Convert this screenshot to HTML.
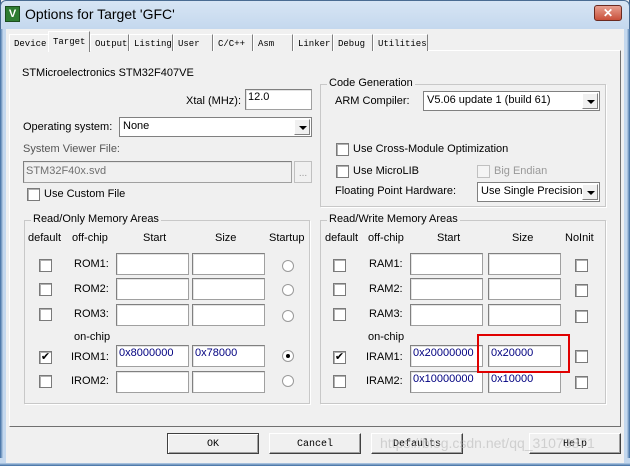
<!DOCTYPE html>
<html><head><style>
*{margin:0;padding:0;box-sizing:border-box}
body{width:630px;height:466px;overflow:hidden;background:#f0f0f0;font-family:"Liberation Sans",Arial,sans-serif;font-size:11px;color:#000;position:relative}
.a{position:absolute;white-space:nowrap}
.frame{position:absolute;left:0;top:0;width:630px;height:466px;border:1px solid #3a5f8a;border-top:none;background:#f0f0f0}
.title{position:absolute;left:0;top:0;width:630px;height:29px;background:linear-gradient(#d7e5f4,#c4d8ee);border:1px solid #4a6c92;border-bottom:none;border-radius:6px 6px 0 0}
.lb{position:absolute;left:0;top:29px;width:8px;height:437px;background:linear-gradient(90deg,#3b6aa0,#c4d8ee 40%,#c4d8ee)}
.rb{position:absolute;right:0;top:29px;width:8px;height:437px;background:linear-gradient(270deg,#3b6aa0,#c4d8ee 40%,#c4d8ee)}
.bb{position:absolute;left:0;top:458px;width:630px;height:8px;background:linear-gradient(0deg,#3b6aa0,#c4d8ee 40%,#c4d8ee)}
.inner{position:absolute;left:6px;top:29px;width:618px;height:434px;background:#f0f0f0}
.tab{position:absolute;top:34px;height:17px;border:1px solid #fff;border-right-color:#808080;border-bottom:none;font-family:"Liberation Mono",monospace;font-size:9px;padding:4px 0 0 4px;background:#f0f0f0;white-space:nowrap;overflow:hidden}
.panel{position:absolute;left:9px;top:50px;width:612px;height:377px;border:1px solid #fff;border-right-color:#707070;border-bottom-color:#707070}
.in{position:absolute;height:22px;background:#fff;border:1px solid #a0a0a0;border-top-color:#808080;border-left-color:#808080;box-shadow:inset 1px 1px 0 #e3e3e3;color:#000080;padding:1px 0 0 2px;font-size:11px;white-space:nowrap;overflow:hidden}
.grp{position:absolute;border:1px solid #c8c8c8;box-shadow:1px 1px 0 #fff}
.gl{position:absolute;top:-8px;left:6px;background:#f0f0f0;padding:0 2px;white-space:nowrap}
.cb{position:absolute;width:13px;height:13px;background:#fff;border:1px solid #7a7a7a;box-shadow:inset 1px 1px 0 #b0b0b0}
.rd{position:absolute;width:12px;height:12px;border-radius:50%;border:1px solid #9a9a9a;background:#fff}
.sel{position:absolute;height:20px;background:#fff;border:1px solid #808080;padding:2px 0 0 3px;white-space:nowrap;overflow:hidden}
.arr{position:absolute;right:1px;top:1px;width:16px;height:16px;background:#f0f0f0;border:1px solid #fff;border-right-color:#808080;border-bottom-color:#808080}
.arr:after{content:"";position:absolute;left:4px;top:6px;border:4px solid transparent;border-top:4px solid #000;border-bottom:0}
.btn{position:absolute;top:433px;width:92px;height:21px;border:1px solid #fff;border-right-color:#404040;border-bottom-color:#404040;box-shadow:inset -1px -1px 0 #a0a0a0;font-family:"Liberation Mono",monospace;font-size:10px;text-align:center;padding-top:5px}
</style></head><body>
<div class="frame"></div>
<div class="lb"></div><div class="rb"></div><div class="bb"></div>
<div class="title"></div>
<div class="a" style="left:5px;top:6px;width:15px;height:16px;background:#2e7d32;border:1px solid #1b4d1e;color:#fff;font-size:11px;font-weight:bold;line-height:14px;text-align:center">V</div>
<div class="a" style="left:25px;top:6px;font-size:14px;color:#000">Options for Target 'GFC'</div>
<div class="a" style="left:594px;top:5px;width:28px;height:16px;background:linear-gradient(#e8a090,#c8503a);border:1px solid #6a2a20;border-radius:3px;color:#fff;font-weight:bold;text-align:center;font-size:12px;line-height:14px">✕</div>
<div class="inner"></div>
<div class="panel"></div>
<div class="tab" style="left:9px;width:40px">Device</div>
<div class="tab" style="left:48px;top:31px;height:21px;width:42px;border-right:1px solid #808080;padding-top:5px">Target</div>
<div class="tab" style="left:90px;width:39px">Output</div>
<div class="tab" style="left:129px;width:44px">Listing</div>
<div class="tab" style="left:173px;width:40px">User</div>
<div class="tab" style="left:213px;width:40px">C/C++</div>
<div class="tab" style="left:253px;width:40px">Asm</div>
<div class="tab" style="left:293px;width:40px">Linker</div>
<div class="tab" style="left:333px;width:40px">Debug</div>
<div class="tab" style="left:373px;width:55px">Utilities</div>

<div class="a" style="left:22px;top:67px">STMicroelectronics STM32F407VE</div>
<div class="a" style="left:186px;top:95px">Xtal (MHz):</div>
<div class="in" style="left:245px;top:89px;width:67px;height:21px;color:#000">12.0</div>
<div class="a" style="left:23px;top:121px">Operating system:</div>
<div class="sel" style="left:119px;top:117px;width:193px">None<div class="arr"></div></div>
<div class="a" style="left:23px;top:143px;color:#555">System Viewer File:</div>
<div class="in" style="left:23px;top:161px;width:269px;background:#f0f0f0;color:#707070;padding-top:3px">STM32F40x.svd</div>
<div class="a" style="left:294px;top:161px;width:18px;height:22px;border:1px solid #c0c0c0;color:#999;text-align:center;font-size:10px;padding-top:6px">...</div>
<div class="cb" style="left:27px;top:188px"></div>
<div class="a" style="left:44px;top:188px">Use Custom File</div>

<div class="grp" style="left:320px;top:84px;width:286px;height:123px"><div class="gl">Code Generation</div></div>
<div class="a" style="left:335px;top:95px">ARM Compiler:</div>
<div class="sel" style="left:423px;top:91px;width:177px">V5.06 update 1 (build 61)<div class="arr"></div></div>
<div class="cb" style="left:336px;top:143px"></div>
<div class="a" style="left:353px;top:143px">Use Cross-Module Optimization</div>
<div class="cb" style="left:336px;top:165px"></div>
<div class="a" style="left:353px;top:165px">Use MicroLIB</div>
<div class="cb" style="left:477px;top:165px;border-color:#c0c0c0;box-shadow:none;background:#f4f4f4"></div>
<div class="a" style="left:494px;top:165px;color:#999">Big Endian</div>
<div class="a" style="left:335px;top:185px">Floating Point Hardware:</div>
<div class="sel" style="left:477px;top:182px;width:123px">Use Single Precision<div class="arr"></div></div>

<div class="grp" style="left:24px;top:220px;width:286px;height:184px"><div class="gl">Read/Only Memory Areas</div></div>
<div class="a" style="left:28px;top:232px">default</div>
<div class="a" style="left:72px;top:232px">off-chip</div>
<div class="a" style="left:143px;top:232px">Start</div>
<div class="a" style="left:215px;top:232px">Size</div>
<div class="a" style="left:269px;top:232px">Startup</div>

<div class="cb" style="left:39px;top:259px"></div><div class="a" style="left:74px;top:258px">ROM1:</div>
<div class="in" style="left:116px;top:253px;width:73px"></div><div class="in" style="left:192px;top:253px;width:73px"></div><div class="rd" style="left:282px;top:260px"></div>
<div class="cb" style="left:39px;top:283px"></div><div class="a" style="left:74px;top:283px">ROM2:</div>
<div class="in" style="left:116px;top:278px;width:73px"></div><div class="in" style="left:192px;top:278px;width:73px"></div><div class="rd" style="left:282px;top:284px"></div>
<div class="cb" style="left:39px;top:308px"></div><div class="a" style="left:74px;top:308px">ROM3:</div>
<div class="in" style="left:116px;top:304px;width:73px"></div><div class="in" style="left:192px;top:304px;width:73px"></div><div class="rd" style="left:282px;top:310px"></div>
<div class="a" style="left:74px;top:331px">on-chip</div>
<div class="cb" style="left:39px;top:351px;font-size:11px;line-height:10px;text-align:center">✔</div><div class="a" style="left:71px;top:351px">IROM1:</div>
<div class="in" style="left:116px;top:345px;width:73px">0x8000000</div><div class="in" style="left:192px;top:345px;width:73px">0x78000</div>
<div class="rd" style="left:282px;top:350px"><div style="position:absolute;left:3px;top:3px;width:4px;height:4px;border-radius:50%;background:#000"></div></div>
<div class="cb" style="left:39px;top:375px"></div><div class="a" style="left:71px;top:375px">IROM2:</div>
<div class="in" style="left:116px;top:371px;width:73px"></div><div class="in" style="left:192px;top:371px;width:73px"></div><div class="rd" style="left:282px;top:375px"></div>

<div class="grp" style="left:320px;top:220px;width:286px;height:184px"><div class="gl">Read/Write Memory Areas</div></div>
<div class="a" style="left:325px;top:232px">default</div>
<div class="a" style="left:368px;top:232px">off-chip</div>
<div class="a" style="left:437px;top:232px">Start</div>
<div class="a" style="left:512px;top:232px">Size</div>
<div class="a" style="left:565px;top:232px">NoInit</div>

<div class="cb" style="left:333px;top:259px"></div><div class="a" style="left:369px;top:258px">RAM1:</div>
<div class="in" style="left:410px;top:253px;width:73px"></div><div class="in" style="left:488px;top:253px;width:73px"></div><div class="cb" style="left:575px;top:259px"></div>
<div class="cb" style="left:333px;top:283px"></div><div class="a" style="left:369px;top:283px">RAM2:</div>
<div class="in" style="left:410px;top:278px;width:73px"></div><div class="in" style="left:488px;top:278px;width:73px"></div><div class="cb" style="left:575px;top:284px"></div>
<div class="cb" style="left:333px;top:308px"></div><div class="a" style="left:369px;top:308px">RAM3:</div>
<div class="in" style="left:410px;top:304px;width:73px"></div><div class="in" style="left:488px;top:304px;width:73px"></div><div class="cb" style="left:575px;top:310px"></div>
<div class="a" style="left:368px;top:331px">on-chip</div>
<div class="cb" style="left:333px;top:351px;font-size:11px;line-height:10px;text-align:center">✔</div><div class="a" style="left:366px;top:351px">IRAM1:</div>
<div class="in" style="left:410px;top:345px;width:73px">0x20000000</div><div class="in" style="left:488px;top:345px;width:73px">0x20000</div><div class="cb" style="left:575px;top:350px"></div>
<div class="cb" style="left:333px;top:375px"></div><div class="a" style="left:366px;top:375px">IRAM2:</div>
<div class="in" style="left:410px;top:371px;width:73px">0x10000000</div><div class="in" style="left:488px;top:371px;width:73px">0x10000</div><div class="cb" style="left:575px;top:376px"></div>
<div class="a" style="left:477px;top:334px;width:93px;height:39px;border:2px solid #e00000"></div>

<div class="btn" style="left:167px;border:1px solid #404040;box-shadow:inset 1px 1px 0 #fff,inset -1px -1px 0 #a0a0a0">OK</div>
<div class="btn" style="left:269px">Cancel</div>
<div class="btn" style="left:371px">Defaults</div>
<div class="btn" style="left:529px">Help</div>
<div class="a" style="left:380px;top:435px;font-size:14px;color:rgba(180,180,180,0.55)">https://blog.csdn.net/qq_31073871</div>
</body></html>
